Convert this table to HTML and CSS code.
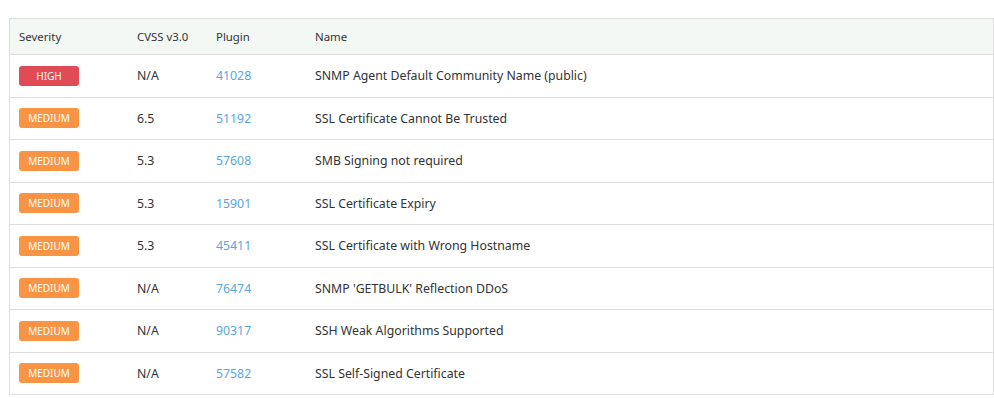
FILE: index.html
```html
<!DOCTYPE html>
<html lang="en">
<head>
    <meta charset="UTF-8">
    <title>Vulnerabilities</title>
    <link rel="stylesheet" href="styles.css">
</head>
<body>
    <table class="vulns">
        <thead>
            <tr>
                <th class="col-sev">Severity</th>
                <th class="col-cvss">CVSS v3.0</th>
                <th class="col-plugin">Plugin</th>
                <th>Name</th>
            </tr>
        </thead>
        <tbody>
            <tr>
                <td><span class="badge high">HIGH</span></td>
                <td>N/A</td>
                <td><a href="#">41028</a></td>
                <td>SNMP Agent Default Community Name (public)</td>
            </tr>
            <tr>
                <td><span class="badge medium">MEDIUM</span></td>
                <td>6.5</td>
                <td><a href="#">51192</a></td>
                <td>SSL Certificate Cannot Be Trusted</td>
            </tr>
            <tr>
                <td><span class="badge medium">MEDIUM</span></td>
                <td>5.3</td>
                <td><a href="#">57608</a></td>
                <td>SMB Signing not required</td>
            </tr>
            <tr>
                <td><span class="badge medium">MEDIUM</span></td>
                <td>5.3</td>
                <td><a href="#">15901</a></td>
                <td>SSL Certificate Expiry</td>
            </tr>
            <tr>
                <td><span class="badge medium">MEDIUM</span></td>
                <td>5.3</td>
                <td><a href="#">45411</a></td>
                <td>SSL Certificate with Wrong Hostname</td>
            </tr>
            <tr>
                <td><span class="badge medium">MEDIUM</span></td>
                <td>N/A</td>
                <td><a href="#">76474</a></td>
                <td>SNMP 'GETBULK' Reflection DDoS</td>
            </tr>
            <tr>
                <td><span class="badge medium">MEDIUM</span></td>
                <td>N/A</td>
                <td><a href="#">90317</a></td>
                <td>SSH Weak Algorithms Supported</td>
            </tr>
            <tr>
                <td><span class="badge medium">MEDIUM</span></td>
                <td>N/A</td>
                <td><a href="#">57582</a></td>
                <td>SSL Self-Signed Certificate</td>
            </tr>
        </tbody>
    </table>
</body>
</html>
```
FILE: styles.css
```css
body {
    margin: 0;
    padding: 18px 0 0 9px;
    background: #fff;
    color: #333;
    font-family: 'Noto Sans', 'Open Sans', Arial, sans-serif;
    font-size: 12.3px;
}
.vulns {
    width: 985px;
    border-collapse: collapse;
    border: 1px solid #ddd;
    table-layout: fixed;
}
.vulns th,
.vulns td {
    text-align: left;
    padding: 0 10px 0 9px;
    border-bottom: 1px solid #ddd;
    vertical-align: middle;
}
.vulns th {
    font-weight: normal;
    height: 35px;
    background: #f4f8f5;
    font-size: 11.4px;
}
.vulns td {
    height: 41.5px;
}
.col-sev { width: 99px; }
.col-cvss { width: 60px; }
.col-plugin { width: 80px; }
.vulns a {
    color: #5aa5e0;
    text-decoration: none;
}
.badge {
    display: inline-block;
    width: 60px;
    height: 20px;
    line-height: 20px;
    border-radius: 3px;
    color: #fff;
    font-size: 10px;
    text-align: center;
    vertical-align: middle;
}
.badge.high { background: #e04b55; }
.badge.medium { background: #f99444; }
```
